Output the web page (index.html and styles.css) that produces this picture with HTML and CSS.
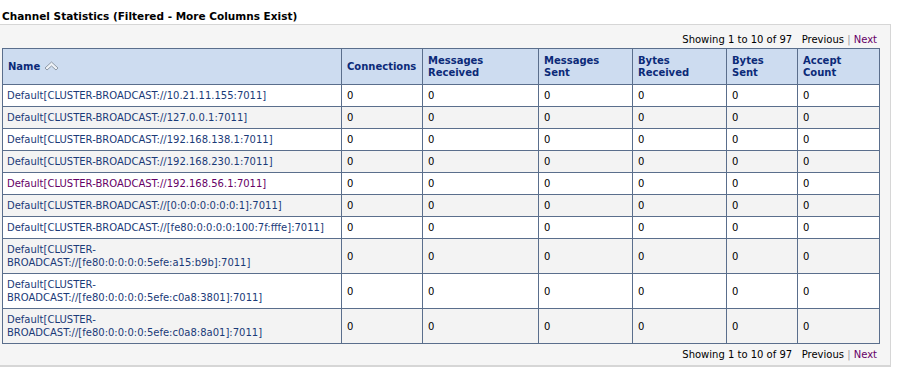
FILE: index.html
```html
<!DOCTYPE html>
<html>
<head>
<meta charset="utf-8">
<link rel="stylesheet" href="styles.css">
</head>
<body>
<div class="title">Channel Statistics (Filtered - More Columns Exist)</div>
<div class="panel">
  <div class="pager">Showing 1 to 10 of 97&nbsp;&nbsp; <span class="prev">Previous</span> <span class="sep">|</span> <a class="next">Next</a></div>
  <table class="grid">
    <colgroup>
      <col class="c1"><col class="c2"><col class="c3"><col class="c4"><col class="c5"><col class="c6"><col class="c7">
    </colgroup>
    <thead>
      <tr>
        <th><span class="hd">Name</span> <svg class="sort" width="15" height="10" viewBox="0 0 15 10"><path d="M1 7 L7.5 1 L14 7 L12 9 L7.5 5 L3 9 Z" fill="#eef2f7" stroke="#8d98a5" stroke-width="1" stroke-linejoin="round"/></svg></th>
        <th>Connections</th>
        <th>Messages<br>Received</th>
        <th>Messages<br>Sent</th>
        <th>Bytes<br>Received</th>
        <th>Bytes<br>Sent</th>
        <th>Accept<br>Count</th>
      </tr>
    </thead>
    <tbody>
      <tr><td><a class="lk">Default[CLUSTER-BROADCAST://10.21.11.155:7011]</a></td><td>0</td><td>0</td><td>0</td><td>0</td><td>0</td><td>0</td></tr>
      <tr class="alt"><td><a class="lk">Default[CLUSTER-BROADCAST://127.0.0.1:7011]</a></td><td>0</td><td>0</td><td>0</td><td>0</td><td>0</td><td>0</td></tr>
      <tr><td><a class="lk">Default[CLUSTER-BROADCAST://192.168.138.1:7011]</a></td><td>0</td><td>0</td><td>0</td><td>0</td><td>0</td><td>0</td></tr>
      <tr class="alt"><td><a class="lk">Default[CLUSTER-BROADCAST://192.168.230.1:7011]</a></td><td>0</td><td>0</td><td>0</td><td>0</td><td>0</td><td>0</td></tr>
      <tr><td><a class="lk visited">Default[CLUSTER-BROADCAST://192.168.56.1:7011]</a></td><td>0</td><td>0</td><td>0</td><td>0</td><td>0</td><td>0</td></tr>
      <tr class="alt"><td><a class="lk">Default[CLUSTER-BROADCAST://[0:0:0:0:0:0:0:1]:7011]</a></td><td>0</td><td>0</td><td>0</td><td>0</td><td>0</td><td>0</td></tr>
      <tr><td><a class="lk">Default[CLUSTER-BROADCAST://[fe80:0:0:0:0:100:7f:fffe]:7011]</a></td><td>0</td><td>0</td><td>0</td><td>0</td><td>0</td><td>0</td></tr>
      <tr class="alt"><td><a class="lk">Default[CLUSTER-<br>BROADCAST://[fe80:0:0:0:0:5efe:a15:b9b]:7011]</a></td><td>0</td><td>0</td><td>0</td><td>0</td><td>0</td><td>0</td></tr>
      <tr><td><a class="lk">Default[CLUSTER-<br>BROADCAST://[fe80:0:0:0:0:5efe:c0a8:3801]:7011]</a></td><td>0</td><td>0</td><td>0</td><td>0</td><td>0</td><td>0</td></tr>
      <tr class="alt"><td><a class="lk">Default[CLUSTER-<br>BROADCAST://[fe80:0:0:0:0:5efe:c0a8:8a01]:7011]</a></td><td>0</td><td>0</td><td>0</td><td>0</td><td>0</td><td>0</td></tr>
    </tbody>
  </table>
  <div class="pager bottom">Showing 1 to 10 of 97&nbsp;&nbsp; <span class="prev">Previous</span> <span class="sep">|</span> <a class="next">Next</a></div>
</div>
</body>
</html>
```
FILE: styles.css
```css
html, body {
  margin: 0;
  padding: 0;
  background: #ffffff;
}
body {
  font-family: "DejaVu Sans", Verdana, sans-serif;
  font-size: 10px;
  color: #000000;
}
.title {
  height: 24px;
  line-height: 32px;
  padding-left: 2px;
  font-weight: bold;
  font-size: 10.5px;
  box-sizing: border-box;
  overflow: hidden;
}
.panel {
  width: 891px;
  box-sizing: border-box;
  background: #f5f5f5;
  border-top: 1px solid #d6d6d6;
  border-right: 1px solid #d6d6d6;
  border-bottom: 2px solid #d6d6d6;
}
.pager {
  height: 23px;
  line-height: 30px;
  text-align: right;
  padding-right: 13px;
  color: #000000;
  font-size: 10px;
}
.pager.bottom {
  height: 21px;
  line-height: 21px;
}
.sep {
  color: #9a9a9a;
}
.next {
  color: #660066;
}
.grid {
  margin-left: 2px;
  width: 878px;
  border-collapse: collapse;
  table-layout: fixed;
  border: 1px solid #5a6e8c;
}
.c1 { width: 339px; }
.c2 { width: 81px; }
.c3 { width: 116px; }
.c4 { width: 94px; }
.c5 { width: 94px; }
.c6 { width: 71px; }
.c7 { width: 82px; }
.grid th {
  background: #cddcf0;
  color: #0b2a78;
  font-weight: bold;
  text-align: left;
  vertical-align: middle;
  line-height: 12px;
  padding: 5px 5px 5px 5px;
  height: 25px;
  border: 1px solid #5a6e8c;
  font-size: 10px;
}
.sort {
  vertical-align: -1px;
}
.grid td {
  background: #ffffff;
  line-height: 13px;
  padding: 4px 5px 4px 5px;
  border: 1px solid #5a6e8c;
  vertical-align: middle;
  font-size: 10px;
}
.grid tr.alt td {
  background: #f3f3f3;
}
.grid td:first-child {
  padding-left: 4px;
}
.lk {
  color: #1a3a78;
}
.lk.visited {
  color: #660066;
}
```
